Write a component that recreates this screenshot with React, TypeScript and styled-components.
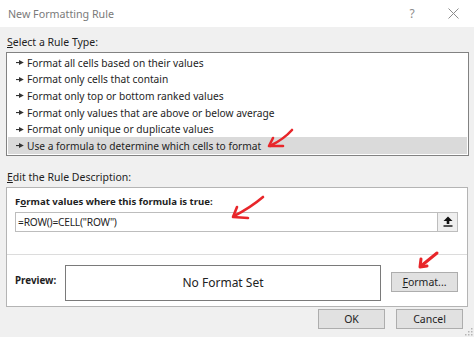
import React from "react";
import styled, { createGlobalStyle } from "styled-components";

const GlobalStyle = createGlobalStyle`
  html, body {
    margin: 0;
    padding: 0;
    background: #f0f0f0;
  }
  body {
    font-family: "Noto Sans", "Open Sans", sans-serif;
    font-size: 10.2px;
    color: #1e1e1e;
  }
`;

const Dialog = styled.div`
  position: relative;
  width: 474px;
  height: 337px;
  background: #f0f0f0;
  overflow: hidden;
`;

const TitleBar = styled.div`
  height: 27px;
  background: #ffffff;
  display: flex;
  align-items: center;
  padding-left: 8px;
  color: #7a7a7a;
  font-size: 10.7px;
`;

const Title = styled.div`
  flex: 1;
`;

const TitleButton = styled.div<{ $w: number }>`
  width: ${(p) => p.$w}px;
  display: flex;
  justify-content: center;
  color: #8c8c8c;
  font-size: 12px;
`;

const SectionLabel = styled.div<{ $top: number }>`
  margin: ${(p) => p.$top}px 0 0 7px;
  height: 16px;
  line-height: 16px;
  font-size: 10.5px;
  u {
    text-decoration: underline;
  }
`;

const RuleList = styled.div`
  margin: 2px 5px 0 6px;
  border: 1px solid #828282;
  background: #ffffff;
  padding: 1px 1px;
`;

const RuleRow = styled.div<{ $selected?: boolean }>`
  height: 16.6px;
  display: flex;
  align-items: center;
  padding-left: 8px;
  gap: 3px;
  box-sizing: border-box;
  padding-top: 1px;
  background: ${(p) => (p.$selected ? "#dadada" : "transparent")};
`;

const Panel = styled.div`
  margin: 2px 6px 0 6px;
  height: 120px;
  box-sizing: border-box;
  border: 1px solid #b4b4b4;
  background: #ffffff;
  display: flex;
  flex-direction: column;
`;

const FormulaSection = styled.div`
  padding: 6px 9px 0 8px;
  height: 60px;
  border-bottom: 1px solid #dcdcdc;
`;

const BoldLabel = styled.div`
  font-weight: 700;
  font-size: 9.6px;
  height: 16px;
  line-height: 16px;
  u {
    text-decoration: underline;
  }
`;

const FormulaRow = styled.div`
  margin-top: 2px;
  display: flex;
  height: 20px;
`;

const FormulaInput = styled.div`
  flex: 1;
  border: 1px solid #bdbdbd;
  border-right: none;
  display: flex;
  align-items: center;
  padding-left: 2px;
  font-size: 10.2px;
  letter-spacing: -0.2px;
  color: #1e1e1e;
`;

const CollapseButton = styled.div`
  width: 19px;
  border: 1px solid #bdbdbd;
  background: #efefef;
  display: flex;
  align-items: center;
  justify-content: center;
`;

const PreviewSection = styled.div`
  flex: 1;
  display: flex;
  align-items: center;
  padding: 0 9px 0 8px;
`;

const PreviewLabel = styled.div`
  font-weight: 700;
  font-size: 9.8px;
  width: 50px;
`;

const PreviewBox = styled.div`
  width: 316px;
  height: 36px;
  border: 1px solid #7a7a7a;
  box-sizing: border-box;
  display: flex;
  align-items: center;
  justify-content: center;
  font-size: 12px;
  color: #222;
  margin-top: 5px;
`;

const Button = styled.div<{ $w: number }>`
  width: ${(p) => p.$w}px;
  height: 20px;
  box-sizing: border-box;
  border: 1px solid #adadad;
  background: #e1e1e1;
  display: flex;
  align-items: center;
  justify-content: center;
  color: #1e1e1e;
  font-size: 10.5px;
  u {
    text-decoration: underline;
  }
`;

const FormatButton = styled(Button)`
  margin-left: auto;
  margin-top: 4px;
`;

const Footer = styled.div`
  display: flex;
  justify-content: flex-end;
  gap: 11px;
  padding: 2px 11px 0 0;
`;

const Overlay = styled.svg`
  position: absolute;
  left: 0;
  top: 0;
  pointer-events: none;
`;

const Grip = styled.svg`
  position: absolute;
  right: 1px;
  bottom: 1px;
`;

const Bullet = () => (
  <svg width="8" height="7" viewBox="0 0 8 7">
    <rect x="0" y="3" width="4" height="1.1" fill="#333" />
    <polygon points="3,1 7.8,3.55 3,6.1" fill="#333" />
  </svg>
);

const rules = [
  "Format all cells based on their values",
  "Format only cells that contain",
  "Format only top or bottom ranked values",
  "Format only values that are above or below average",
  "Format only unique or duplicate values",
  "Use a formula to determine which cells to format",
];

export default function App() {
  return (
    <Dialog>
      <GlobalStyle />
      <TitleBar>
        <Title>New Formatting Rule</Title>
        <TitleButton $w={20}>?</TitleButton>
        <TitleButton $w={24} style={{ marginLeft: 19, marginRight: 9 }}>
          <svg width="11" height="11" viewBox="0 0 11 11">
            <path d="M0.5 0.5 L10.5 10.5 M10.5 0.5 L0.5 10.5" stroke="#8c8c8c" strokeWidth="1" />
          </svg>
        </TitleButton>
      </TitleBar>

      <SectionLabel $top={7}>
        <u>S</u>elect a Rule Type:
      </SectionLabel>
      <RuleList>
        {rules.map((r, i) => (
          <RuleRow key={r} $selected={i === rules.length - 1}>
            <Bullet />
            <span>{r}</span>
          </RuleRow>
        ))}
      </RuleList>

      <SectionLabel $top={13}>
        <u>E</u>dit the Rule Description:
      </SectionLabel>
      <Panel>
        <FormulaSection>
          <BoldLabel>
            F<u>o</u>rmat values where this formula is true:
          </BoldLabel>
          <FormulaRow>
            <FormulaInput>=ROW()=CELL("ROW")</FormulaInput>
            <CollapseButton>
              <svg width="10" height="11" viewBox="0 0 10 11">
                <polygon points="5,0.5 9.5,5 6.3,5 6.3,8 3.7,8 3.7,5 0.5,5" fill="#111" />
                <rect x="0.5" y="9.3" width="9" height="1.4" fill="#111" />
              </svg>
            </CollapseButton>
          </FormulaRow>
        </FormulaSection>
        <PreviewSection>
          <PreviewLabel>Preview:</PreviewLabel>
          <PreviewBox>No Format Set</PreviewBox>
          <FormatButton $w={67}>
            <u>F</u>ormat...
          </FormatButton>
        </PreviewSection>
      </Panel>

      <Footer>
        <Button $w={67}>OK</Button>
        <Button $w={67}>Cancel</Button>
      </Footer>

      <Overlay width="474" height="337" viewBox="0 0 474 337">
        <g fill="none" stroke="#e8262a" strokeWidth="2.6" strokeLinecap="round" strokeLinejoin="round">
          <path d="M292 130 Q284 139 270 146" />
          <path d="M273 138 L269 146 L283 146" />
          <path d="M263 197 Q250 208 234 216" />
          <path d="M237 207 L233 217 L248 218" />
          <path d="M437 253 L421 266" strokeWidth="3" />
          <path d="M421 259 L420 267 L427 266" strokeWidth="3" />
        </g>
      </Overlay>
      <Grip width="8" height="8" viewBox="0 0 8 8">
        <g fill="#b5b5b5">
          <rect x="6" y="0" width="1.5" height="1.5" />
          <rect x="3" y="3" width="1.5" height="1.5" />
          <rect x="6" y="3" width="1.5" height="1.5" />
          <rect x="0" y="6" width="1.5" height="1.5" />
          <rect x="3" y="6" width="1.5" height="1.5" />
          <rect x="6" y="6" width="1.5" height="1.5" />
        </g>
      </Grip>
    </Dialog>
  );
}
